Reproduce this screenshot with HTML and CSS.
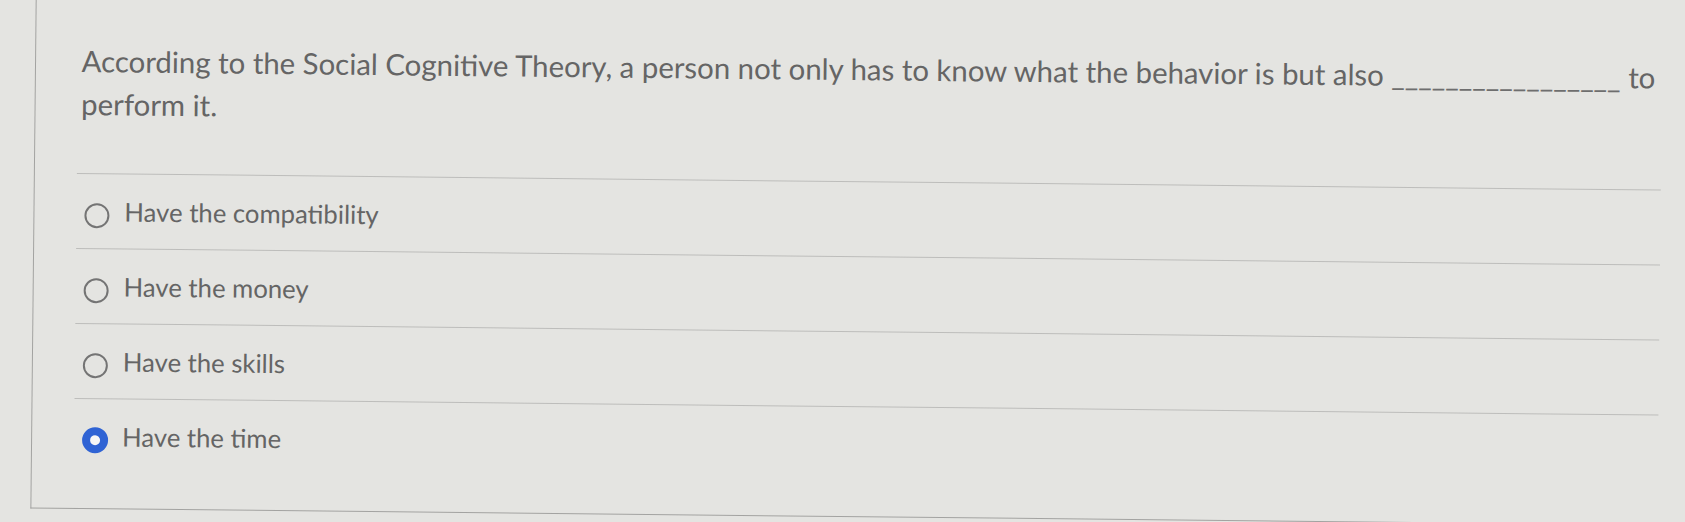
FILE: index.html
```html
<!DOCTYPE html>
<html>
<head>
<meta charset="utf-8">
<link rel="stylesheet" href="styles.css">
</head>
<body>
<div class="screen">
  <div class="panel">
    <p class="question">According to the Social Cognitive Theory, a person not only has to know what the behavior is but also <span class="blank">_________________</span> to perform it.</p>
    <ul class="options">
      <li class="option"><span class="radio"></span><span class="label">Have the compatibility</span></li>
      <li class="option"><span class="radio"></span><span class="label">Have the money</span></li>
      <li class="option"><span class="radio"></span><span class="label">Have the skills</span></li>
      <li class="option"><span class="radio checked"></span><span class="label">Have the time</span></li>
    </ul>
  </div>
</div>
</body>
</html>
```

FILE: styles.css
```css
html {
  background: #e4e4e1;
}
body {
  margin: 0;
  font-family: Lato, "Open Sans", sans-serif;
  color: #656565;
}
.screen {
  width: 1685px;
  height: 522px;
  transform: rotate(0.6deg);
  transform-origin: 50% 50%;
}
.panel {
  margin-left: 33px;
  width: 1720px;
  height: 517px;
  border-left: 1.5px solid #a3a3a1;
  border-bottom: 1.5px solid #a3a3a1;
  box-sizing: border-box;
  padding-top: 48px;
}
.question {
  margin: 0 0 48px 45.5px;
  font-size: 29.4px;
  line-height: 42.7px;
  width: 1600px;
}
.blank {
  color: #6e6e6e;
}
.options {
  list-style: none;
  margin: 0 0 0 42px;
  padding: 0;
  width: 1584px;
}
.option {
  display: flex;
  align-items: center;
  gap: 15px;
  height: 75px;
  padding: 8px 0 0 8px;
  border-top: 1.5px solid #bdbdbb;
  box-sizing: border-box;
  font-size: 25.7px;
}
.radio {
  width: 25px;
  height: 25px;
  border-radius: 50%;
  border: 2.5px solid #747474;
  box-sizing: border-box;
  flex: none;
}
.radio.checked {
  width: 26px;
  height: 26px;
  margin-left: -0.5px;
  margin-right: -0.5px;
  border: 8.5px solid #2f63d4;
  background: #f6f6f6;
}
.label {
  position: relative;
  top: -4px;
}
```
